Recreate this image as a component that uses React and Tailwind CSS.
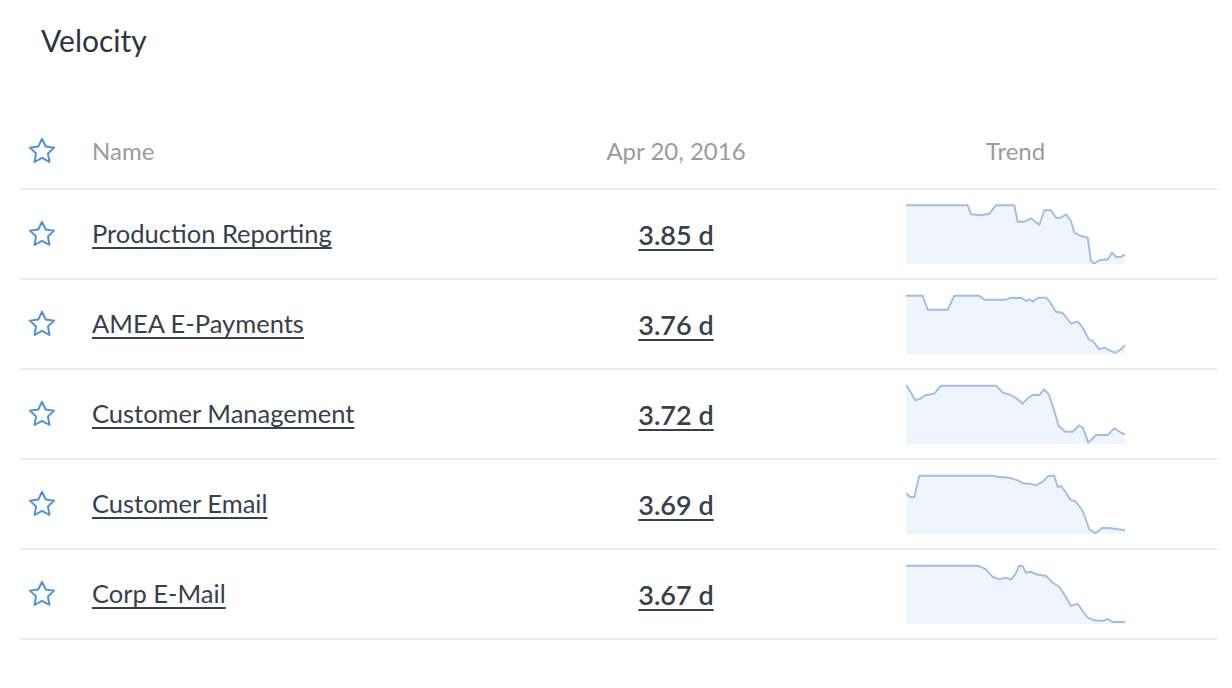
import React from "react";

const rows = [
  {
    name: "Production Reporting",
    value: "3.85 d",
    points: [
      [0, 1.3], [61.7, 1.3], [65, 10.3], [75, 11.3], [83.3, 9.7], [90, 1.3], [108.3, 1.3],
      [111.7, 17.7], [118.3, 17.7], [125, 14.3], [133.3, 21], [138.3, 6.3], [145, 6.3],
      [150, 13.7], [155, 13.7], [160, 10.3], [165, 17], [168.3, 28.7], [175, 32],
      [181.7, 33.7], [185, 57], [188.3, 59.7], [193.3, 56.3], [201.7, 55.3], [206, 48.7],
      [210, 53], [215, 53], [219, 50.3],
    ],
  },
  {
    name: "AMEA E-Payments",
    value: "3.76 d",
    points: [
      [0, 1.7], [16.7, 1.7], [21.7, 15.7], [41.7, 15.7], [48.3, 1.7], [73.3, 1.7],
      [78.3, 5.7], [100, 5.7], [105, 3.7], [110, 4.3], [115, 3.7], [120, 7], [123.3, 5.3],
      [126.7, 7.7], [131.7, 3.7], [140, 3.7], [143.3, 7], [150, 17.7], [156, 18.7],
      [160, 23], [165, 29.7], [171.7, 27.7], [176.7, 33.7], [182.7, 45.3], [186.7, 47],
      [193.3, 55.3], [198.3, 53.7], [203.3, 56.3], [209.3, 58.7], [215, 55.3], [219, 51],
    ],
  },
  {
    name: "Customer Management",
    value: "3.72 d",
    points: [
      [0, 1], [4, 7], [9.3, 16.3], [15, 14.3], [19.3, 11.3], [28.3, 9.7], [35, 1.7],
      [90, 1.7], [96.7, 8.7], [105, 11], [111.7, 15.3], [116.7, 19.7], [121.7, 14.3],
      [126.7, 11], [133.3, 11], [138.3, 5.3], [142.7, 10.3], [147.3, 23.7], [152.7, 42],
      [159.3, 47.7], [166.7, 47.7], [173.3, 41.3], [176.7, 43.7], [182.3, 58.7], [190, 51],
      [201.7, 51], [208.3, 44.3], [215, 48.7], [219, 50.3],
    ],
  },
  {
    name: "Customer Email",
    value: "3.69 d",
    points: [
      [0, 19.3], [4, 23], [8.3, 23], [13.3, 1.7], [86.7, 1.7], [91.7, 2.7], [103.3, 3.7],
      [111.7, 6.3], [116.7, 9.3], [123.3, 9.7], [130, 11.3], [136.7, 7.7], [142.7, 1.7],
      [148.3, 1.7], [151.7, 13], [155, 12], [160, 18.7], [164, 25.3], [170, 27.7],
      [176.7, 37], [183.3, 55.3], [189.3, 59.3], [196.7, 53.7], [205, 54.3], [211.7, 55.3],
      [219, 56.3],
    ],
  },
  {
    name: "Corp E-Mail",
    value: "3.67 d",
    points: [
      [0, 1.7], [71.7, 1.7], [80, 5.3], [86.7, 13], [93.3, 15.3], [100, 13.7], [105, 15.3],
      [109.3, 10.3], [113.3, 1.7], [116.7, 2.3], [120, 8.7], [125, 7.7], [130, 10.3],
      [140, 12], [146.7, 18.7], [153.3, 23], [159.3, 32], [165, 42], [171.7, 39.7],
      [176.7, 47], [181.7, 53.7], [188.3, 56.3], [196.7, 57], [201.7, 55], [206.7, 58],
      [219, 58],
    ],
  },
];

const StarIcon = () => (
  <svg width="30" height="30" viewBox="0 0 24 24" fill="none">
    <polygon
      points="12,2.2 14.95,8.4 21.7,9.3 16.75,14 18,20.8 12,17.5 6,20.8 7.25,14 2.3,9.3 9.05,8.4"
      stroke="#4a90e2"
      strokeWidth="1.5"
      strokeLinejoin="round"
    />
  </svg>
);

const Sparkline = ({ points }) => {
  const line = points.map((p) => p.join(",")).join(" ");
  const area = `0,60 ${line} 219,60`;
  return (
    <svg width="219" height="60" viewBox="0 0 219 60">
      <polygon points={area} fill="#eef5fd" />
      <polyline
        points={line}
        fill="none"
        stroke="#9ebee9"
        strokeWidth="1.9"
        strokeLinejoin="round"
      />
    </svg>
  );
};

export default function App() {
  return (
    <div
      className="w-[1232px] h-[688px] bg-white px-[20px] pt-[22px]"
      style={{ fontFamily: "Lato, 'Noto Sans', sans-serif" }}
    >
      <h1 className="pl-[21px] text-[30px] leading-[36px] text-[#2d3440]">Velocity</h1>

      <div className="mt-[56px] w-[1197px]">
        <div className="grid grid-cols-[72px_446px_276px_1fr] h-[76px] items-center border-b-2 border-[#ececec] text-[24px] text-[#9b9b9b]">
          <div className="pl-[7px] flex items-center">
            <StarIcon />
          </div>
          <div>Name</div>
          <div className="text-center">Apr 20, 2016</div>
          <div className="text-center">Trend</div>
        </div>

        {rows.map((row) => (
          <div
            key={row.name}
            className="grid grid-cols-[72px_446px_276px_1fr] h-[90px] items-center border-b-2 border-[#ececec]"
          >
            <div className="pl-[7px] flex items-center">
              <StarIcon />
            </div>
            <div className="leading-none">
              <a
                href="#"
                className="text-[25.5px] text-[#37404d] underline decoration-2 underline-offset-[4px]"
              >
                {row.name}
              </a>
            </div>
            <div className="text-center leading-none">
              <a
                href="#"
                className="text-[27px] font-semibold text-[#37404d] underline decoration-2 underline-offset-[4px]"
              >
                {row.value}
              </a>
            </div>
            <div className="flex justify-center">
              <Sparkline points={row.points} />
            </div>
          </div>
        ))}
      </div>
    </div>
  );
}
